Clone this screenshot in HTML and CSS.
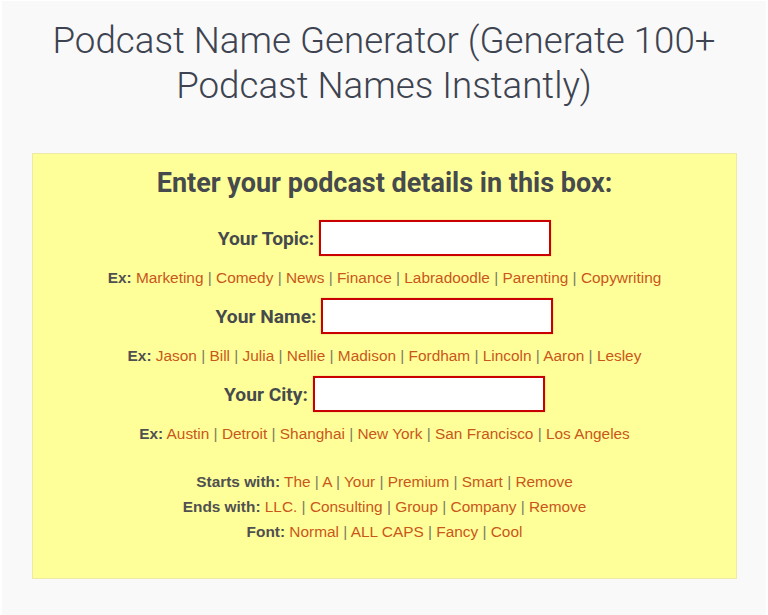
FILE: index.html
```html
<!doctype html>
<html lang="en">
<head>
    <meta charset="UTF-8">
    <title>Podcast Name Generator</title>
    <link rel="stylesheet" href="styles.css">
</head>
<body>
    <div class="page">
        <h1 class="title">Podcast Name Generator (Generate 100+ Podcast Names Instantly)</h1>

        <div class="generator">
            <h2>Enter your podcast details in this box:</h2>

            <div class="field">
                <label for="topic">Your Topic:</label>
                <input type="text" id="topic" name="topic">
            </div>
            <p class="examples">
                <b>Ex:</b> <a href="#">Marketing</a> | <a href="#">Comedy</a> | <a href="#">News</a> | <a href="#">Finance</a> | <a href="#">Labradoodle</a> | <a href="#">Parenting</a> | <a href="#">Copywriting</a>
            </p>

            <div class="field">
                <label for="name">Your Name:</label>
                <input type="text" id="name" name="name">
            </div>
            <p class="examples">
                <b>Ex:</b> <a href="#">Jason</a> | <a href="#">Bill</a> | <a href="#">Julia</a> | <a href="#">Nellie</a> | <a href="#">Madison</a> | <a href="#">Fordham</a> | <a href="#">Lincoln</a> | <a href="#">Aaron</a> | <a href="#">Lesley</a>
            </p>

            <div class="field">
                <label for="city">Your City:</label>
                <input type="text" id="city" name="city">
            </div>
            <p class="examples">
                <b>Ex:</b> <a href="#">Austin</a> | <a href="#">Detroit</a> | <a href="#">Shanghai</a> | <a href="#">New York</a> | <a href="#">San Francisco</a> | <a href="#">Los Angeles</a>
            </p>

            <div class="options">
                <p><b>Starts with:</b> <a href="#">The</a> | <a href="#">A</a> | <a href="#">Your</a> | <a href="#">Premium</a> | <a href="#">Smart</a> | <a href="#">Remove</a></p>
                <p><b>Ends with:</b> <a href="#">LLC.</a> | <a href="#">Consulting</a> | <a href="#">Group</a> | <a href="#">Company</a> | <a href="#">Remove</a></p>
                <p><b>Font:</b> <a href="#">Normal</a> | <a href="#">ALL CAPS</a> | <a href="#">Fancy</a> | <a href="#">Cool</a></p>
            </div>
        </div>
    </div>
</body>
</html>
```

FILE: styles.css
```css
body {
    margin: 0;
    background-color: #fff;
    font-family: Roboto, "Liberation Sans", Arial, sans-serif;
}

.page {
    margin: 1px 2px 0 2px;
    padding: 17px 0 40px;
    background-color: #f9f9f9;
}

.title {
    margin: 0 auto;
    max-width: 700px;
    font-size: 36.7px;
    font-weight: 300;
    line-height: 45px;
    text-align: center;
    color: #3d4350;
}

.generator {
    margin: 45px 29px 0 30px;
    padding: 14px 10px 34px;
    background-color: #ffff99;
    border: 1px solid #eee9a6;
    text-align: center;
}

.generator h2 {
    margin: 0 0 22px;
    font-size: 27px;
    font-weight: 700;
    line-height: 30px;
    color: #464a4c;
}

.field {
    display: flex;
    justify-content: center;
    align-items: center;
    gap: 5px;
}

.field label {
    font-size: 19.2px;
    font-weight: 700;
    color: #464a4c;
}

.field input {
    box-sizing: border-box;
    width: 232px;
    height: 36px;
    padding: 4px 8px;
    border: 2px solid #c80000;
    background-color: #fff;
    box-shadow: 0 0 1px rgba(200, 0, 0, 0.4);
}

.examples,
.options p {
    margin: 0;
    font-family: "Liberation Sans", Arial, sans-serif;
    font-size: 15.4px;
    color: #7a7a62;
}

.examples {
    line-height: 20px;
    margin: 12px 0 10px;
}

.examples b,
.options b {
    color: #505050;
}

.options {
    margin-top: 25px;
}

.options p {
    line-height: 25px;
}

a {
    color: #c9571a;
    text-decoration: none;
}
```
